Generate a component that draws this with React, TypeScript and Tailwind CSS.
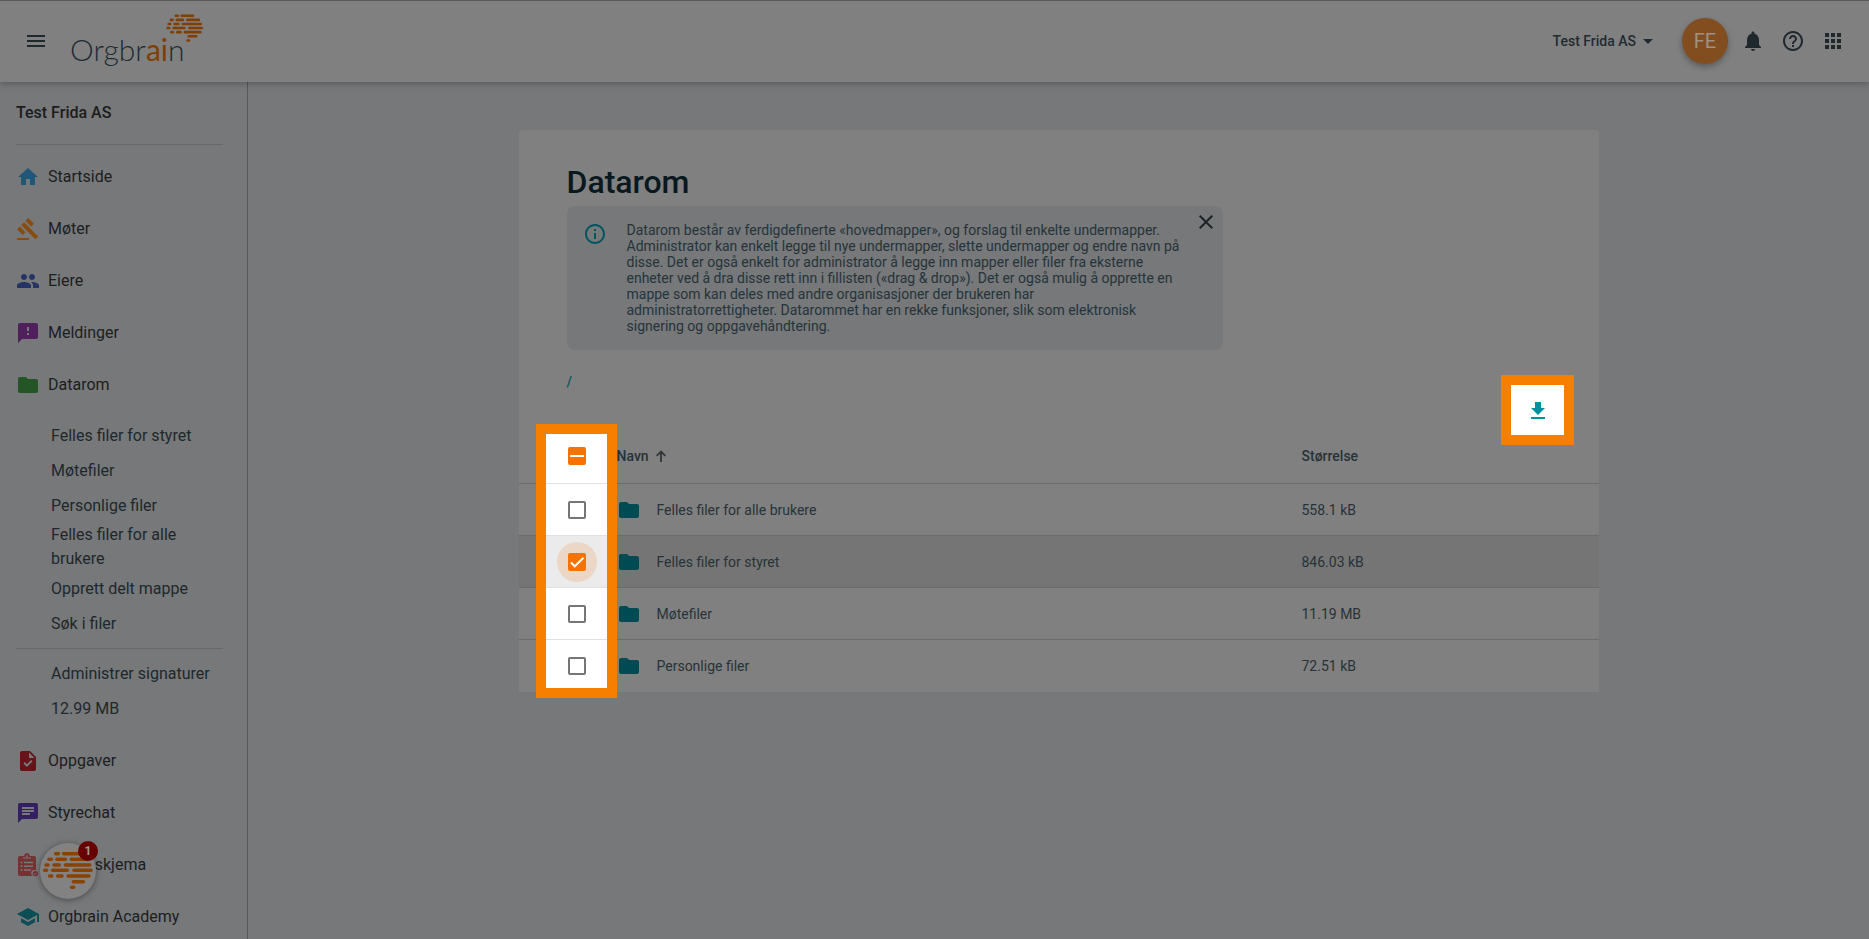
import { useState } from "react";
import type { ReactNode } from "react";
import {
  MdApps,
  MdArrowDropDown,
  MdChat,
  MdClose,
  MdFeedback,
  MdFolder,
  MdGavel,
  MdGetApp,
  MdHelpOutline,
  MdHome,
  MdInfoOutline,
  MdMenu,
  MdNotifications,
  MdPeople,
  MdSchool,
  MdTask,
} from "react-icons/md";

const folders = [
  { name: "Felles filer for alle brukere", size: "558.1 kB" },
  { name: "Felles filer for styret", size: "846.03 kB" },
  { name: "Møtefiler", size: "11.19 MB" },
  { name: "Personlige filer", size: "72.51 kB" },
];

const subLinks = [
  "Felles filer for styret",
  "Møtefiler",
  "Personlige filer",
  "Felles filer for alle brukere",
  "Opprett delt mappe",
  "Søk i filer",
];

// [y, x start, x end]
const dashes = [
  [5, 38, 46],
  [5, 62, 108],
  [22, 18, 25],
  [22, 42, 67],
  [22, 85, 132],
  [39, 9, 15],
  [39, 33, 49],
  [39, 67, 140],
  [55, 5, 11],
  [55, 29, 73],
  [55, 93, 144],
  [72, 20, 26],
  [72, 44, 57],
  [72, 75, 138],
  [89, 91, 121],
  [106, 86, 92],
];

const Brain = ({ className }: { className: string }) => (
  <svg viewBox="0 0 150 112" className={className} aria-hidden="true">
    {dashes.map(([y, x1, x2]) => (
      <line
        key={`${y}-${x1}`}
        x1={x1}
        x2={x2}
        y1={y}
        y2={y}
        stroke="currentColor"
        strokeWidth="10.5"
        strokeLinecap="round"
      />
    ))}
  </svg>
);

const SurveyIcon = () => (
  <svg viewBox="0 0 24 24" className="size-6" aria-hidden="true">
    <path
      fill="currentColor"
      d="M4 3h4.2a2.8 2.8 0 0 1 5.6 0H18a2 2 0 0 1 2 2v12.2a3 3 0 0 0-3 5.8H4a2 2 0 0 1-2-2V5a2 2 0 0 1 2-2z"
    />
    <g stroke="#76787a" strokeWidth="1.6">
      <path d="M8 9.5h9M8 13.2h9M8 17h7M4.5 9.5h2M4.5 13.2h2M4.5 17h2" />
      <path d="M7 5h8" strokeWidth="1" />
    </g>
    <circle cx="11" cy="3.2" r="0.9" fill="#76787a" />
    <circle cx="19.4" cy="20.6" r="2.7" fill="currentColor" />
    <path d="m18.2 20.8.9.9 1.7-2" stroke="#76787a" strokeWidth="0.8" fill="none" />
  </svg>
);

const NavItem = ({
  icon,
  color,
  label,
}: {
  icon: ReactNode;
  color: string;
  label: string;
}) => (
  <a href="#" className="flex h-[52px] items-center gap-2 px-4 text-[#1c1e1f]">
    <span className={color}>{icon}</span>
    {label}
  </a>
);

const Sidebar = () => (
  <aside className="w-62 shrink-0 border-r border-[#55595b] text-base">
    <h2 className="px-4 pt-[19px] font-medium text-[#1c1c1c]">Test Frida AS</h2>
    <hr className="mt-[19px] mr-6 ml-4 border-[#66696b]" />
    <nav className="pt-1.5">
      <NavItem icon={<MdHome className="size-6" />} color="text-[#1f5779]" label="Startside" />
      <NavItem icon={<MdGavel className="size-6" />} color="text-[#894c0e]" label="Møter" />
      <NavItem icon={<MdPeople className="size-6" />} color="text-[#263465]" label="Eiere" />
      <NavItem icon={<MdFeedback className="size-6" />} color="text-[#50205c]" label="Meldinger" />
      <NavItem icon={<MdFolder className="size-6" />} color="text-[#235527]" label="Datarom" />
      <div className="py-[7px]">
        {subLinks.map((item) => (
          <a
            key={item}
            href="#"
            className="flex min-h-[35px] items-center pr-12 pl-[51px] text-[#1d282d]"
          >
            {item}
          </a>
        ))}
      </div>
      <hr className="mr-6 ml-4 border-[#66696b]" />
      <div className="pt-[7px] pb-[9px] text-[#1d282d]">
        <a href="#" className="flex h-[35px] items-center pl-[51px]">
          Administrer signaturer
        </a>
        <p className="flex h-[35px] items-center pl-[51px]">12.99 MB</p>
      </div>
      <NavItem icon={<MdTask className="size-6" />} color="text-[#661419]" label="Oppgaver" />
      <NavItem icon={<MdChat className="size-6" />} color="text-[#342060]" label="Styrechat" />
      <NavItem icon={<SurveyIcon />} color="text-[#793032]" label="Spørreskjema" />
      <NavItem icon={<MdSchool className="size-6" />} color="text-[#0d4d55]" label="Orgbrain Academy" />
    </nav>
  </aside>
);

const Header = () => (
  <header className="relative z-10 flex h-[82px] shrink-0 items-center border-t border-[#5a5a5a] bg-[#808080] px-6 pb-0.5 text-[#1f282c] shadow-[0_2px_6px_rgba(0,0,0,0.25)]">
    <button aria-label="Meny">
      <MdMenu className="size-6" />
    </button>
    <a href="#" aria-label="Orgbrain" className="ml-5">
      <svg width="140" height="60" viewBox="0 0 140 60" aria-hidden="true">
        <text
          x="2"
          y="50"
          fontSize="30"
          fontWeight="300"
          className="fill-[#1d2c34] font-['Lato',sans-serif]"
        >
          Orgbr
          <tspan fontWeight="400" className="fill-[#7f3f00]">
            ai
          </tspan>
          n
        </text>
        <g stroke="#7f3f00" strokeWidth="10.5" strokeLinecap="round" transform="translate(98.5 3.5) scale(0.245)">
          {dashes.map(([y, x1, x2]) => (
            <line key={`${y}-${x1}`} x1={x1} x2={x2} y1={y} y2={y} />
          ))}
        </g>
      </svg>
    </a>
    <button className="ml-auto flex items-center text-sm font-medium text-[#1d2c33]">
      Test Frida AS
      <MdArrowDropDown className="size-6" />
    </button>
    <button className="mr-[13px] ml-[22px] size-[46px] rounded-full bg-[#824e20] text-xl text-[#9d9285] shadow-[0_3px_6px_rgba(0,0,0,0.3)]">
      FE
    </button>
    <div className="flex gap-4">
      <button aria-label="Varsler">
        <MdNotifications className="size-6" />
      </button>
      <button aria-label="Hjelp">
        <MdHelpOutline className="size-6" />
      </button>
      <button aria-label="Apper">
        <MdApps className="size-6" />
      </button>
    </div>
  </header>
);

const Checkbox = ({
  label,
  checked,
  partial,
  onChange,
}: {
  label: string;
  checked: boolean;
  partial?: boolean;
  onChange: () => void;
}) => (
  <label
    className={`relative ml-3.5 flex size-10 items-center justify-center rounded-full ${
      checked && !partial ? "bg-[#ecd6c5]" : ""
    }`}
  >
    <input
      type="checkbox"
      aria-label={label}
      checked={checked}
      onChange={onChange}
      className="size-[18px] appearance-none rounded-xs border-2 border-[#757575] bg-white checked:border-[#f57300] checked:bg-[#f57300]"
    />
    {checked && (
      <svg
        viewBox="0 0 18 18"
        className="pointer-events-none absolute size-[18px]"
        fill="none"
        stroke="#fff"
        strokeWidth="2"
      >
        <path d={partial ? "M2 9h14" : "m3 9.5 3.8 3.8L15.5 4.8"} />
      </svg>
    )}
  </label>
);

const FileTable = () => {
  const [selected, setSelected] = useState<number[]>([1]);

  const toggle = (idx: number) => {
    setSelected(
      selected.includes(idx)
        ? selected.filter((i) => i !== idx)
        : [...selected, idx]
    );
  };

  const toggleAll = () => {
    setSelected(selected.length === folders.length ? [] : folders.map((_, i) => i));
  };

  return (
    <div className="relative">
      <table className="w-full table-fixed border-separate border-spacing-0 text-left text-sm text-[#263339]">
        <thead>
          <tr className="h-14">
            <td className="w-6 border-b border-[#6c6c6c]" />
            <th className="w-16 border-b border-[#e0e0e0] bg-white p-0">
              <Checkbox
                label="Velg alle"
                checked={selected.length > 0}
                partial={selected.length < folders.length}
                onChange={toggleAll}
              />
            </th>
            <th className="border-b border-[#6c6c6c] pl-2.5 font-medium">
              <button className="flex items-center gap-[7px] font-medium">
                Navn
                <svg
                  viewBox="0 0 10 12"
                  className="h-3 w-2.5 text-[#303638]"
                  fill="none"
                  stroke="currentColor"
                  strokeWidth="1.8"
                >
                  <path d="M5 12V1.5M.7 5.8 5 1.5l4.3 4.3" />
                </svg>
              </button>
            </th>
            <th className="w-[297px] border-b border-[#6c6c6c] font-medium">Størrelse</th>
          </tr>
        </thead>
        <tbody>
          {folders.map((item, idx) => {
            const active = selected.includes(idx);
            const line = idx === folders.length - 1 ? "" : "border-b";
            return (
              <tr key={item.name} className={`h-[52px] ${active ? "bg-[#757575]" : ""}`}>
                <td className={`border-[#6c6c6c] ${line}`} />
                <td
                  className={`border-[#e0e0e0] p-0 ${line} ${
                    active ? "bg-[#ebebeb]" : "bg-white"
                  }`}
                >
                  <Checkbox label={item.name} checked={active} onChange={() => toggle(idx)} />
                </td>
                <td className={`border-[#6c6c6c] pl-2.5 ${line}`}>
                  <a href="#" className="flex items-center gap-4">
                    <MdFolder className="size-6 text-[#004b53]" />
                    {item.name}
                  </a>
                </td>
                <td className={`border-[#6c6c6c] ${line}`}>{item.size}</td>
              </tr>
            );
          })}
        </tbody>
      </table>
      <div className="pointer-events-none absolute -top-1 -bottom-1.5 left-[17px] w-[81px] border-10 border-[#f77f00]" />
    </div>
  );
};

const InfoBox = () => {
  const [isOpen, setIsOpen] = useState<boolean>(true);

  if (!isOpen) return null;
  return (
    <section className="flex max-w-[656px] items-start rounded-lg bg-[#76787a] py-4 pl-4 text-sm/4 text-[#25343b]">
      <MdInfoOutline className="size-6 shrink-0 text-[#00565f]" />
      <p className="ml-5 flex-1">
        Datarom består av ferdigdefinerte «hovedmapper», og forslag til enkelte undermapper.
        Administrator kan enkelt legge til nye undermapper, slette undermapper og endre navn på
        disse. Det er også enkelt for administrator å legge inn mapper eller filer fra eksterne
        enheter ved å dra disse rett inn i fillisten («drag &amp; drop»). Det er også mulig å
        opprette en mappe som kan deles med andre organisasjoner der brukeren har
        administratorrettigheter. Datarommet har en rekke funksjoner, slik som elektronisk
        signering og oppgavehåndtering.
      </p>
      <button
        aria-label="Lukk"
        onClick={() => setIsOpen(false)}
        className="-mt-3 mr-[5px] ml-2 text-[#1d2427]"
      >
        <MdClose className="size-6" />
      </button>
    </section>
  );
};

const ChatBubble = () => (
  <button
    aria-label="Åpne chat"
    className="fixed bottom-10 left-10 z-20 flex size-14 items-center justify-center rounded-full bg-[#828282] shadow-[0_1px_6px_rgba(0,0,0,0.4)]"
  >
    <Brain className="w-[50px] text-[#8a4200]" />
    <span className="absolute -top-0.5 -right-0.5 flex size-5 items-center justify-center rounded-full bg-[#690000] text-xs font-bold text-[#9a9a9a]">
      1
    </span>
  </button>
);

const App = () => {
  return (
    <div className="flex h-screen flex-col overflow-hidden bg-[#76787a] font-['Roboto',sans-serif]">
      <Header />
      <div className="flex min-h-0 flex-1">
        <Sidebar />
        <main className="flex-1">
          <div className="mx-auto mt-12 max-w-[1080px] rounded-t bg-[#808080]">
            <div className="px-12 pt-8">
              <h1 className="pb-1 text-[32px]/10 font-medium text-[#09181e]">Datarom</h1>
              <InfoBox />
            </div>
            <div className="flex h-[78px] items-start justify-between pt-4 pr-[35px] pl-12">
              <a href="#" className="pt-1.5 text-sm font-medium text-[#00565f]">
                /
              </a>
              <button
                aria-label="Last ned"
                className="relative mt-[19px] flex h-[50px] w-[53px] shrink-0 items-center justify-center bg-white pt-px pl-0.5 text-[#00919f] ring-10 ring-[#f77f00]"
              >
                <MdGetApp className="size-6" />
              </button>
            </div>
            <FileTable />
          </div>
        </main>
      </div>
      <ChatBubble />
    </div>
  );
};

export default App;
